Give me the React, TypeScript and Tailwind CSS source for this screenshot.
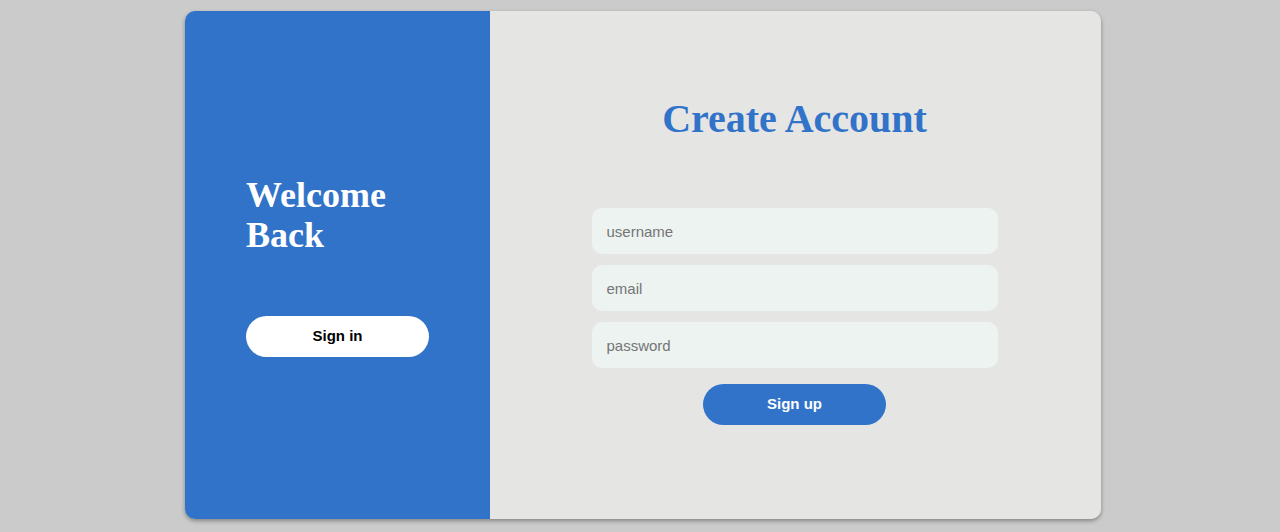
import React from 'react';

export default function App() {
  const fields = ['username', 'email', 'password'];

  return (
    <div className="min-h-[532px] w-full bg-[#cbcbcb] pt-[11px]">
      <div className="ml-[185px] grid h-[508px] w-[916px] grid-cols-[305px_1fr] overflow-hidden rounded-[10px] shadow-[0_2px_4px_rgba(0,0,0,0.35)]">
        <div className="flex flex-col justify-center bg-[#3173c8] px-[61px] pt-[2px]">
          <h1 className="mb-[61px] font-['Liberation_Serif',serif] text-[36px] font-bold leading-[40px] text-white">
            Welcome Back
          </h1>
          <button className="h-[41px] w-[183px] rounded-full bg-white font-['Liberation_Sans',Arial,sans-serif] text-[15px] font-bold text-black">
            Sign in
          </button>
        </div>

        <div className="flex flex-col items-center bg-[#e5e5e4] pr-[2px] pt-[84px]">
          <h2 className="font-['Liberation_Serif',serif] text-[40px] font-bold leading-[48px] text-[#3173c8]">
            Create Account
          </h2>
          <form className="mt-[65px] flex w-[406px] flex-col gap-[11px]">
            {fields.map((f) => (
              <input
                key={f}
                type={f === 'password' ? 'password' : 'text'}
                placeholder={f}
                className="h-[46px] w-full rounded-[10px] bg-[#ecf3f1] px-[15px] font-['Liberation_Sans',Arial,sans-serif] text-[15px] text-[#333] outline-none placeholder:text-[#757575]"
              />
            ))}
            <button
              type="button"
              className="mx-auto mt-[5px] h-[41px] w-[183px] rounded-full bg-[#3173c8] font-['Liberation_Sans',Arial,sans-serif] text-[15px] font-bold text-white"
            >
              Sign up
            </button>
          </form>
        </div>
      </div>
    </div>
  );
}
